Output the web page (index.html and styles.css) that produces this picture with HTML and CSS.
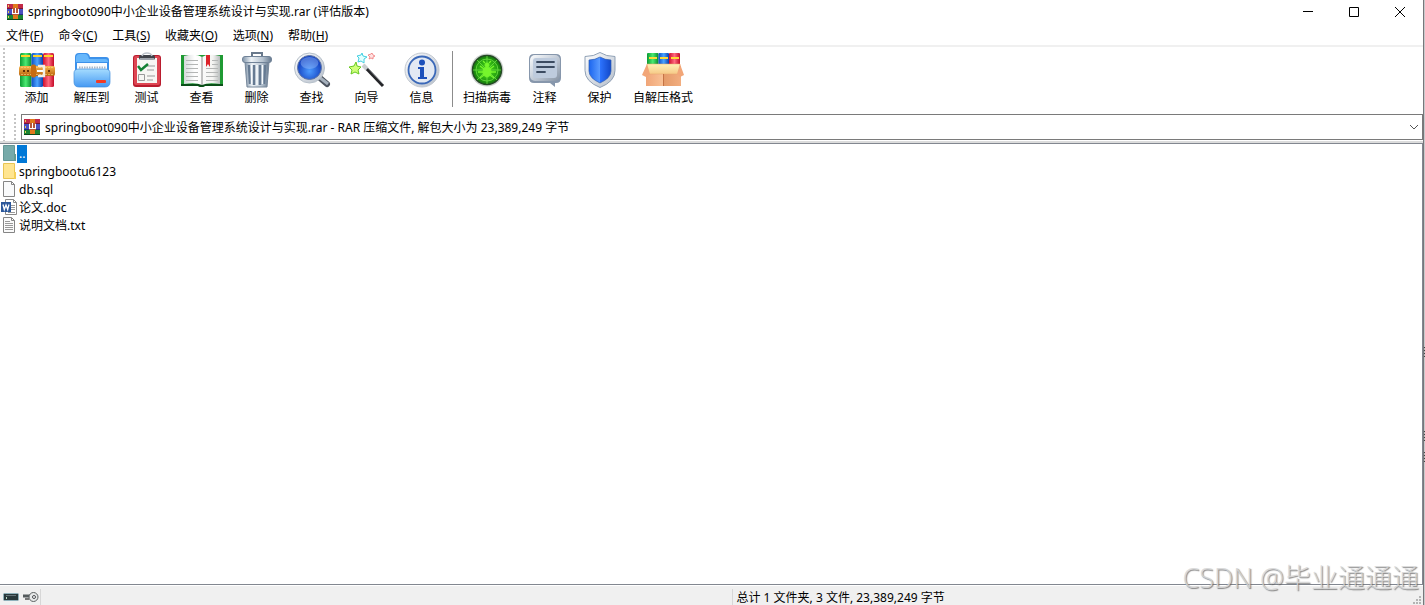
FILE: index.html
```html
<!DOCTYPE html>
<html lang="zh-CN">
<head>
    <meta charset="UTF-8">
    <meta name="viewport" content="width=device-width, initial-scale=1.0">
    <title>springboot090中小企业设备管理系统设计与实现.rar (评估版本)</title>
    <link rel="stylesheet" href="styles.css">
</head>
<body>
    <!-- Shared gradients and the archive icon -->
    <svg class="defs" width="0" height="0" aria-hidden="true">
        <defs>
            <linearGradient id="gGreen"><stop offset="0" stop-color="#0a9a32"/><stop offset=".5" stop-color="#4bea72"/><stop offset="1" stop-color="#078a2c"/></linearGradient>
            <linearGradient id="gBlue"><stop offset="0" stop-color="#0d4fc4"/><stop offset=".5" stop-color="#4ba4ff"/><stop offset="1" stop-color="#0a3fae"/></linearGradient>
            <linearGradient id="gRed"><stop offset="0" stop-color="#cf0f2c"/><stop offset=".5" stop-color="#ff6a80"/><stop offset="1" stop-color="#c40a28"/></linearGradient>
            <linearGradient id="gBelt" x2="0" y2="1"><stop offset="0" stop-color="#f8b64c"/><stop offset="1" stop-color="#b8640f"/></linearGradient>
            <linearGradient id="gSteel" x2="1" y2="1"><stop offset="0" stop-color="#fbfcfd"/><stop offset=".5" stop-color="#c3ccd8"/><stop offset="1" stop-color="#8592a3"/></linearGradient>
            <linearGradient id="gRing" x2="1" y2="1"><stop offset="0" stop-color="#fff"/><stop offset=".5" stop-color="#d9dee5"/><stop offset="1" stop-color="#b3bcc8"/></linearGradient>
            <linearGradient id="gFolder" x2="0" y2="1"><stop offset="0" stop-color="#a5dcff"/><stop offset="1" stop-color="#4599f3"/></linearGradient>
            <linearGradient id="gPage"><stop offset="0" stop-color="#d5d9da"/><stop offset=".3" stop-color="#fff"/><stop offset=".8" stop-color="#f4f4f2"/><stop offset="1" stop-color="#b9bdbd"/></linearGradient>
            <linearGradient id="gBin"><stop offset="0" stop-color="#7f93a8"/><stop offset=".3" stop-color="#eef3f7"/><stop offset=".7" stop-color="#b5c2cf"/><stop offset="1" stop-color="#65788e"/></linearGradient>
            <radialGradient id="gLens" cy=".65"><stop offset="0" stop-color="#4c9bff"/><stop offset="1" stop-color="#1746c4"/></radialGradient>
            <radialGradient id="gRadar"><stop offset="0" stop-color="#4fd21a"/><stop offset=".6" stop-color="#2cae12"/><stop offset="1" stop-color="#14780c"/></radialGradient>
            <linearGradient id="gShield"><stop offset="0" stop-color="#1c66ef"/><stop offset=".5" stop-color="#5a9bff"/><stop offset=".5" stop-color="#2d74ff"/><stop offset="1" stop-color="#1248c9"/></linearGradient>
            <linearGradient id="gBox"><stop offset="0" stop-color="#f0a578"/><stop offset=".5" stop-color="#f9c296"/><stop offset=".5" stop-color="#e49a68"/><stop offset="1" stop-color="#f2ae80"/></linearGradient>
            <linearGradient id="gFlap" x2="0" y2="1"><stop offset="0" stop-color="#fff0b5"/><stop offset="1" stop-color="#f6c987"/></linearGradient>
        </defs>
        <symbol id="rar" viewBox="0 0 16 16">
            <path fill="#c22a48" d="M0 0h16v5H0z"/>
            <path fill="#4a50c0" d="M0 5h16v6H0z"/>
            <path fill="#1b8433" d="M0 11h16v5H0z"/>
            <path fill="#7a1535" d="M0 4h16v1H0z"/>
            <path fill="#272c80" d="M0 10h16v1H0z"/>
            <path fill="#0c4a19" d="M0 15h16v1H0z"/>
            <path fill="#e9cf54" d="M1 1h1v2H1zM1 7h1v2H1zM1 12h1v2H1z"/>
            <path fill="#e07a1c" d="M6 0h5v5H6zM6 11h5v4H6z"/>
            <path fill="#b5563a" d="M5 4h7v7H5z"/>
            <path fill="#fff" d="M5 5h1v5H5zM11 5h1v5h-1zM8 4h1v5H8zM6 9h5v1H6z"/>
        </symbol>
    </svg>

    <div class="window">
        <header class="title-bar">
            <svg class="app-icon"><use href="#rar"/></svg>
            <h1>springboot090中小企业设备管理系统设计与实现.rar (评估版本)</h1>
            <div class="window-buttons">
                <button aria-label="最小化"><svg width="10" height="10"><path d="M0 4.500h10"/></svg></button>
                <button aria-label="最大化"><svg width="10" height="10"><path d="M.5.500h9v9h-9z"/></svg></button>
                <button aria-label="关闭"><svg width="10" height="10"><path d="M0 0l10 10M10 0L0 10"/></svg></button>
            </div>
        </header>

        <nav class="menu-bar">
            <button>文件(<u>F</u>)</button>
            <button>命令(<u>C</u>)</button>
            <button>工具(<u>S</u>)</button>
            <button>收藏夹(<u>O</u>)</button>
            <button>选项(<u>N</u>)</button>
            <button>帮助(<u>H</u>)</button>
        </nav>

        <div class="rebar">
            <div class="grip"></div>
            <div class="bands">
                <div class="toolbar">
                    <button class="tool">
                        <svg width="36" height="36" viewBox="0 0 36 36">
                            <rect x="1" y="1" width="11.500" height="34" rx="1.500" fill="url(#gGreen)"/>
                            <rect x="12.500" y="1" width="11.500" height="34" rx="1.500" fill="url(#gBlue)"/>
                            <rect x="24" y="1" width="11" height="34" rx="1.500" fill="url(#gRed)"/>
                            <path fill="#ffd42a" d="M2 3h9v2H2zM14 3h9v2h-9zM25 3h9v2h-9z"/>
                            <rect x="0" y="14" width="36" height="10" rx="2" fill="url(#gBelt)"/>
                            <path stroke="#ffd68a" stroke-width=".6" stroke-dasharray="2 1" d="M2 15.500h32M2 22.500h32"/>
                            <rect x="12" y="12.500" width="5" height="13" rx="2" fill="#c66c13"/>
                            <path fill="none" stroke="#f2eee5" stroke-width="2.400" d="M19 14h6v10h-6"/>
                            <path stroke="#fff" stroke-width="2" d="M18 19h6"/>
                            <path fill="#663008" d="M4 18h2v2H4zM8 18h2v2H8zM29 18h2v2h-2z"/>
                        </svg>
                        <span>添加</span>
                    </button>
                    <button class="tool">
                        <svg width="38" height="36" viewBox="0 0 38 36">
                            <path fill="#3c91ea" d="M2 5q0-4 4-4h7q3 0 4 4h16q3 0 3 3v16H2z"/>
                            <path fill="#67b7fb" d="M3 6q0-4 4-4h5q3 0 4 5h16q3 0 3 3H3z"/>
                            <path fill="#fafcff" d="M4 11h30v10H4z"/>
                            <path stroke="#aab8c8" stroke-width="2" stroke-dasharray="1.500 1" d="M6 15.500h27"/>
                            <path fill="url(#gFolder)" stroke="#3f8cdb" stroke-width=".7" d="M1 21q0-4 5-4h26q5 0 5 4v9q0 5-5 5H6q-5 0-5-5z"/>
                            <rect x="23" y="28" width="10" height="3" rx="1" fill="#f33b24"/>
                        </svg>
                        <span>解压到</span>
                    </button>
                    <button class="tool">
                        <svg width="30" height="36" viewBox="0 0 30 36">
                            <rect x="1" y="3" width="28" height="32" rx="3" fill="#b91c2e"/>
                            <rect x="2" y="4" width="26" height="29" rx="2" fill="#de4653"/>
                            <path fill="#f7f6f3" d="M5 6h20v25H5z"/>
                            <rect x="7" y="3" width="16" height="5" rx="2" fill="#3f4249"/>
                            <path fill="none" stroke="#bfc4cc" stroke-width="1.500" d="M8 7h14M10 4q1-3 5-3t5 3"/>
                            <path fill="none" stroke="#999" d="M6.500 22.500h6v6h-6zM15 14h8M15 18h7M15 24h8M15 28h6"/>
                            <path fill="none" stroke="#148033" stroke-width="2.500" d="M6 14l3 4 7-6"/>
                        </svg>
                        <span>测试</span>
                    </button>
                    <button class="tool">
                        <svg width="42" height="36" viewBox="0 0 42 36">
                            <path fill="#1f9a33" d="M0 3h42v31H24l-2 1h-3l-2-1H0z"/>
                            <path fill="#0b4f19" d="M0 32h42v2H24l-2 1h-3l-2-1H0z"/>
                            <path fill="url(#gPage)" d="M3 4q12-3 18 1v28q-6-3-18-1zM21 5q6-4 18-1v28q-12-2-18 1z"/>
                            <path stroke="#b4b6b5" d="M5 8.500h12M5 12.500h12M5 16.500h12M5 20.500h12M5 24.500h12M5 28.500h12M25 16.500h12M25 20.500h12M25 24.500h12M25 28.500h12M31 8.500h6M31 12.500h6"/>
                            <path stroke="#888" d="M21 5v28"/>
                            <path fill="#dc2229" d="M25 3h4v12l-2-3-2 3z"/>
                        </svg>
                        <span>查看</span>
                    </button>
                    <button class="tool">
                        <svg width="32" height="36" viewBox="0 0 32 36">
                            <path fill="none" stroke="#69798c" stroke-width="2" d="M11 5V1h10v4"/>
                            <path fill="url(#gBin)" stroke="#77889b" d="M4 10h24l-2 25H6z"/>
                            <path stroke="#657a92" stroke-width="2.500" d="M8 13l1 19M13 13v20M19 13v20M24 13l-1 19"/>
                            <path stroke="#f7fbfd" stroke-width="1.500" d="M10.500 13v19M16 13v20M21.500 13v19"/>
                            <rect x="1.500" y="4.500" width="29" height="6" rx="2.500" fill="url(#gBin)" stroke="#718398"/>
                        </svg>
                        <span>删除</span>
                    </button>
                    <button class="tool">
                        <svg width="38" height="36" viewBox="0 0 38 36">
                            <path stroke="#4c535e" stroke-width="6" stroke-linecap="round" d="M27 26l7 6"/>
                            <path stroke="#a5b0bc" stroke-width="3" d="M26 25l9 7"/>
                            <circle cx="16.500" cy="16" r="15" fill="url(#gRing)" stroke="#b6c0ca"/>
                            <circle cx="16.500" cy="15.500" r="12" fill="url(#gLens)" stroke="#6277a4"/>
                            <ellipse cx="16.500" cy="11" rx="9" ry="6" fill="#a4c9ff" opacity=".4"/>
                        </svg>
                        <span>查找</span>
                    </button>
                    <button class="tool">
                        <svg width="36" height="36" viewBox="0 0 36 36">
                            <path stroke="#252629" stroke-width="3" d="M15 14l19 20"/>
                            <path stroke="#85898e" stroke-width="1" d="M16 13l18 19"/>
                            <path stroke="#c9cdd0" stroke-width="4" d="M14 13l4 4"/>
                            <path fill="#d0ff7b" stroke="#69ca22" d="M7 10l1 4 4 1-3 3 1 4-4-2-4 2 1-4-3-3 5-1z"/>
                            <path fill="#e2ffff" stroke="#44cfe1" d="M13 1l1 3 4 1-3 2v4l-3-2-3 1 1-4-2-2 4-1z"/>
                            <path fill="#ffe3e3" stroke="#ef7777" stroke-width=".8" d="M23 1l1 2 2 1-2 1v2l-2-1-2 1 1-2-2-2 3-1z"/>
                        </svg>
                        <span>向导</span>
                    </button>
                    <button class="tool">
                        <svg width="36" height="36" viewBox="0 0 36 36">
                            <circle cx="18" cy="18" r="17" fill="url(#gRing)" stroke="#c2c8d0"/>
                            <circle cx="18" cy="18" r="13.500" fill="#e2e9f3" stroke="#3a68b8" stroke-width="1.800"/>
                            <circle cx="18" cy="10.500" r="3" fill="#1b50bb"/>
                            <path fill="#1b50bb" d="M14 15h6v10h3v2h-9v-2h2v-8h-2z"/>
                        </svg>
                        <span>信息</span>
                    </button>
                    <div class="separator"></div>
                    <button class="tool tool-scan">
                        <svg width="34" height="36" viewBox="0 0 34 36">
                            <circle cx="17" cy="18" r="16.500" fill="#cdd1cf"/>
                            <circle cx="17" cy="18" r="14.500" fill="url(#gRadar)" stroke="#254a25" stroke-width="1.500"/>
                            <path fill="none" stroke="#6fdf45" stroke-width=".8" d="M17 4v28M3 18h28M7 8l20 20M27 8L7 28M6 18a11 11 0 1 0 22 0a11 11 0 1 0-22 0"/>
                            <g fill="#76f62c" stroke="#76f62c">
                                <ellipse cx="17" cy="20" rx="4" ry="5"/>
                                <circle cx="17" cy="13" r="2"/>
                                <path fill="none" stroke-width="1.300" d="M14 17l-4-3M20 17l4-3M13 20H8M21 20h5M14 23l-4 3M20 23l4 3M15 11l-2-2M19 11l2-2"/>
                            </g>
                        </svg>
                        <span>扫描病毒</span>
                    </button>
                    <button class="tool">
                        <svg width="34" height="36" viewBox="0 0 34 36">
                            <path fill="#8797ac" d="M6 2h22q5 0 5 5v19q0 5-5 5h-1v4l-5-4H6q-5 0-5-5V7q0-5 5-5z"/>
                            <rect x="2" y="3" width="30" height="26" rx="5" fill="url(#gSteel)"/>
                            <rect x="5" y="6" width="24" height="20" rx="3" fill="#becbdd"/>
                            <path stroke="#3c4b61" stroke-width="1.800" stroke-linecap="round" d="M9 10h17M9 15h17M9 20h8"/>
                        </svg>
                        <span>注释</span>
                    </button>
                    <button class="tool">
                        <svg width="32" height="36" viewBox="0 0 32 36">
                            <path fill="url(#gRing)" stroke="#8fa0b5" d="M16 .5q6 4 15 4v14q0 11-15 17Q1 29.500 1 18.500v-14q9 0 15-4z"/>
                            <path fill="url(#gShield)" stroke="#305eb0" stroke-width=".7" d="M16 5q5 3 11 3v11q0 7-11 12Q5 26 5 19V8q6 0 11-3z"/>
                        </svg>
                        <span>保护</span>
                    </button>
                    <button class="tool tool-sfx">
                        <svg width="42" height="36" viewBox="0 0 42 36">
                            <rect x="5" y="1" width="11.500" height="16" rx="1" fill="url(#gGreen)"/>
                            <rect x="16.500" y="1" width="10.500" height="16" rx="1" fill="url(#gBlue)"/>
                            <rect x="27" y="1" width="11" height="16" rx="1" fill="url(#gRed)"/>
                            <path fill="#ffdb36" d="M7 5h8v2H7zM18 5h8v2h-8zM29 5h8v2h-8z"/>
                            <path fill="url(#gBox)" d="M4 14h35v20H4z"/>
                            <path fill="url(#gFlap)" stroke="#e5a66c" stroke-width=".5" d="M5 12h33v10H5z"/>
                            <path fill="#f2a678" d="M5 12L0 23l4 2 4-3zM38 12l4 11-4 2-3-3z"/>
                            <path stroke="#c57345" d="M21.500 22v12"/>
                        </svg>
                        <span>自解压格式</span>
                    </button>
                </div>

                <div class="address-band">
                    <div class="grip"></div>
                    <div class="address">
                        <svg class="app-icon"><use href="#rar"/></svg>
                        <select aria-label="当前位置">
                            <option>springboot090中小企业设备管理系统设计与实现.rar - RAR 压缩文件, 解包大小为 23,389,249 字节</option>
                        </select>
                        <svg class="arrow" width="10" height="6"><path d="M1 1l4 4 4-4"/></svg>
                    </div>
                </div>
            </div>
        </div>

        <main>
            <ul class="file-list">
                <li>
                    <a href="#" class="selected">
                        <svg width="16" height="16"><path fill="#76aaa9" stroke="#639796" d="M2.500.5h11v15h-11z"/><path fill="#659b91" d="M13 9h2v7h-2z"/></svg>
                        <span>..</span>
                    </a>
                </li>
                <li>
                    <a href="#">
                        <svg width="16" height="16"><path fill="#ffe590" stroke="#e9c552" d="M2.500.5h11v15h-11z"/><path fill="#f5cf57" d="M13 9h2v7h-2z"/></svg>
                        <span>springbootu6123</span>
                    </a>
                </li>
                <li>
                    <a href="#">
                        <svg width="16" height="16"><path fill="#f9fafb" stroke="#858585" d="M2.500.5h8l3 3v12h-11zM10.500.5v3h3"/></svg>
                        <span>db.sql</span>
                    </a>
                </li>
                <li>
                    <a href="#">
                        <svg width="16" height="16"><path fill="#fff" stroke="#8a8a8a" d="M4.500.5h8l3 3v12h-11zM12.500.5v3h3"/><path stroke="#9a9a9a" d="M10 6.500h4M10 8.500h4M10 10.500h4M7 13.500h7"/><path fill="#2b579a" d="M0 3h10v10H0z"/><path fill="none" stroke="#fff" stroke-width="1.300" d="M2 5.500l1.300 5L5 6l1.700 4.500 1.300-5"/></svg>
                        <span>论文.doc</span>
                    </a>
                </li>
                <li>
                    <a href="#">
                        <svg width="16" height="16"><path fill="#fafafa" stroke="#858585" d="M2.500.5h8l3 3v12h-11zM10.500.5v3h3"/><path stroke="#999" d="M4 4.500h5M4 6.500h8M4 8.500h8M4 10.500h8M4 12.500h8"/></svg>
                        <span>说明文档.txt</span>
                    </a>
                </li>
            </ul>
        </main>

        <footer class="status-bar">
            <div class="status-icons">
                <svg width="16" height="10" viewBox="0 0 16 10"><rect x=".5" y="1.500" width="15" height="7" rx="1" fill="#29383b" stroke="#8fb1bb"/><path fill="#66757a" d="M3 3h10v1H3z"/><path fill="#b9d9c2" d="M3 5h1v2H3z"/></svg>
                <svg width="17" height="12" viewBox="0 0 17 12"><path stroke="#555b5d" stroke-width="3" d="M1 5h8"/><path stroke="#777" stroke-width="2" d="M3 8h4"/><circle cx="11.500" cy="6" r="4.500" fill="#e7e9e9" stroke="#5d6263"/><circle cx="12" cy="6" r="1.500" fill="#fff" stroke="#4a4e50"/></svg>
            </div>
            <div class="status-cell"></div>
            <div class="status-cell">总计 1 文件夹, 3 文件, 23,389,249 字节</div>
            <svg class="resize-grip" width="9" height="9"><path fill="#b4b4b4" d="M6 0h2v2H6zM3 3h2v2H3zM6 3h2v2H6zM0 6h2v2H0zM3 6h2v2H3zM6 6h2v2H6z"/></svg>
        </footer>
    </div>

    <div class="watermark">CSDN @毕业通通通</div>
</body>
</html>
```
FILE: styles.css
```css
/* Basic Styles */
* {
    box-sizing: border-box;
}

/* The strip right of the window shows a bit of the desktop behind it */
body {
    margin: 0;
    padding-right: 1px;
    background-color: #c9c9cb;
    background-image:
        repeating-linear-gradient(#444 0 1px, #bbb 1px 3px),
        repeating-linear-gradient(#444 0 1px, #bbb 1px 3px),
        repeating-linear-gradient(#444 0 1px, #bbb 1px 3px);
    background-position: right 347px, right 431px, right 452px;
    background-size: 1px 10px;
    background-repeat: no-repeat;
    font-family: "Noto Sans", "Noto Sans CJK SC", sans-serif;
    font-size: 12px;
    line-height: 16px;
    color: #000;
}

button {
    padding: 0;
    border: none;
    background: none;
    font: inherit;
    color: inherit;
}

svg {
    display: block;
    flex: none;
}

.defs {
    position: absolute;
}

.window {
    display: flex;
    flex-direction: column;
    min-height: 100vh;
    border-right: 1px solid #77777b;
    background-color: #fff;
}

.app-icon {
    width: 16px;
    height: 16px;
}

/* Title Bar */
.title-bar {
    display: flex;
    align-items: center;
    gap: 5px;
    height: 23px;
    padding-left: 7px;
}

h1 {
    flex: 1;
    margin: 0;
    font-size: 12px;
    font-weight: normal;
}

.window-buttons {
    display: flex;
}

.window-buttons button {
    display: flex;
    justify-content: center;
    align-items: center;
    width: 46px;
    height: 23px;
}

.window-buttons path {
    fill: none;
    stroke: #000;
}

.window-buttons button:hover {
    background-color: #e5e5e5;
}

/* Menu Bar */
.menu-bar {
    display: flex;
    gap: 15px;
    height: 24px;
    padding: 4px 6px 0;
    border-bottom: 2px solid #f0f0f0;
}

/* Toolbar */
.rebar {
    display: flex;
    padding-left: 3px;
    border-bottom: 2px solid #dcdcdc;
}

.grip {
    width: 2px;
    margin-top: 1px;
    background: repeating-linear-gradient(#c4c4c4 0 2px, transparent 2px 4px);
}

.bands {
    flex: 1;
    min-width: 0;
}

.toolbar {
    display: flex;
    height: 66px;
    padding: 4px 0 0 4px;
}

.tool {
    display: flex;
    flex-direction: column;
    align-items: center;
    gap: 2px;
    width: 55px;
    padding-top: 1px;
    white-space: nowrap;
}

.tool:hover {
    background-color: #e5f3ff;
}

.tool-scan {
    width: 60px;
}

.tool-sfx {
    width: 72px;
}

.separator {
    width: 1px;
    height: 56px;
    margin: 0 4px 0 3px;
    background-color: #8c8c8c;
}

.address-band {
    display: flex;
    gap: 5px;
    padding-left: 9px;
}

.address {
    display: flex;
    align-items: center;
    flex: 1;
    height: 26px;
    margin: 1px 0;
    padding: 0 3px 0 2px;
    border: 1px solid #7a7a7a;
}

.address select {
    flex: 1;
    min-width: 0;
    padding: 2px 5px 0;
    border: none;
    outline: none;
    appearance: none;
    background: none;
    font: inherit;
    color: inherit;
}

.arrow path {
    fill: none;
    stroke: #555;
}

/* File List */
main {
    flex: 1;
    padding-top: 1px;
    border: 1px solid #828790;
    border-left: none;
}

.file-list {
    margin: 0;
    padding: 0 0 0 1px;
    list-style: none;
}

.file-list a {
    display: inline-flex;
    height: 18px;
    color: #000;
    text-decoration: none;
    vertical-align: top;
}

.file-list span {
    padding: 1px 2px;
}

.file-list .selected span {
    background-color: #0078d7;
    color: #fff;
}

/* Status Bar */
.status-bar {
    position: relative;
    display: flex;
    height: 20px;
    padding-top: 3px;
    border-top: 1px solid #fff;
    background-color: #f0f0f0;
}

.status-icons {
    display: flex;
    align-items: center;
    gap: 3px;
    width: 40px;
    padding-left: 3px;
}

.status-cell {
    flex: 1;
    padding: 1px 0 0 4px;
    border-left: 1px solid #d7d7d7;
}

.resize-grip {
    position: absolute;
    right: 1px;
    bottom: 0;
}

/* Watermark */
.watermark {
    position: absolute;
    right: 6px;
    bottom: 7px;
    color: rgba(215, 215, 215, 0.85);
    font-size: 27px;
    font-weight: 300;
    line-height: 40px;
    text-shadow: 1px 1px 1px rgba(90, 90, 90, 0.7);
    pointer-events: none;
}
```
